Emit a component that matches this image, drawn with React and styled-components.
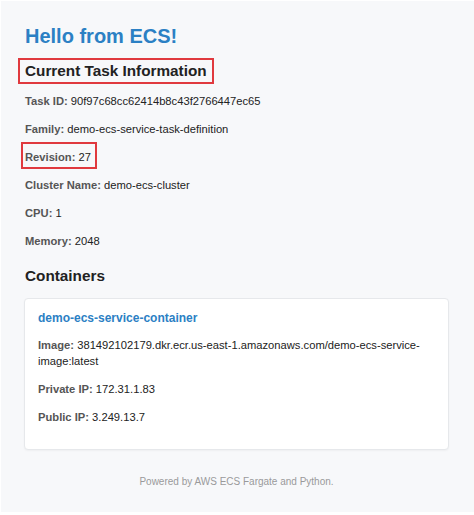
import React from 'react';
import styled, { createGlobalStyle } from 'styled-components';

const GlobalStyle = createGlobalStyle`
    * {
        box-sizing: border-box;
    }
    body {
        margin: 0;
        background: #ffffff;
        font-family: "Liberation Sans", Arial, sans-serif;
    }
`;

const Page = styled.main`
    margin: 1px 0 0 1px;
    min-height: 511px;
    background: #f7f8fa;
    padding: 23px 25px 22px 23px;
`;

const Title = styled.h1`
    margin: 0 0 14px 1px;
    font-size: 20px;
    line-height: 24px;
    font-weight: 700;
    color: #2b80c4;
`;

const SectionTitle = styled.h2`
    position: relative;
    display: inline-block;
    margin: ${(p) => p.$top || 0}px 0 13px 1px;
    font-size: 15.3px;
    line-height: 18px;
    font-weight: 700;
    color: #222222;

    ${(p) => p.$marked && `
        &::after {
            content: "";
            position: absolute;
            top: -4px;
            bottom: -4px;
            left: -7px;
            right: -7px;
            border: 2px solid #e0393e;
        }
    `}
`;

const Block = styled.div`
    display: flex;
    flex-direction: column;
    align-items: flex-start;
    gap: 12px;
    padding-left: ${(p) => p.$indent || 0}px;
`;

const Row = styled.p`
    position: relative;
    display: inline-block;
    margin: 0;
    font-size: 11.2px;
    line-height: 16px;
    color: #222222;

    strong {
        color: #555555;
        font-weight: 700;
    }

    ${(p) => p.$marked && `
        &::after {
            content: "";
            position: absolute;
            top: -7px;
            bottom: -4px;
            left: -4px;
            right: -6px;
            border: 2px solid #e0393e;
        }
    `}
`;

const Card = styled.section`
    background: #ffffff;
    border: 1px solid #e6e8eb;
    border-radius: 4px;
    box-shadow: 0 1px 2px rgba(0, 0, 0, 0.04);
    padding: 11px 13px 24px;
`;

const CardTitle = styled.h3`
    margin: 0 0 11px;
    font-size: 12px;
    line-height: 16px;
    font-weight: 700;
    color: #2b80c4;
`;

const Footer = styled.footer`
    margin-top: 25px;
    text-align: center;
    font-size: 10px;
    line-height: 14px;
    color: #9a9a9a;
`;

const task = [
    ['Task ID', '90f97c68cc62414b8c43f2766447ec65'],
    ['Family', 'demo-ecs-service-task-definition'],
    ['Revision', '27', true],
    ['Cluster Name', 'demo-ecs-cluster'],
    ['CPU', '1'],
    ['Memory', '2048'],
];

const container = [
    ['Image', '381492102179.dkr.ecr.us-east-1.amazonaws.com/demo-ecs-service-image:latest'],
    ['Private IP', '172.31.1.83'],
    ['Public IP', '3.249.13.7'],
];

export default function App() {
    return (
        <>
            <GlobalStyle />
            <Page>
                <Title>Hello from ECS!</Title>
                <SectionTitle $marked>Current Task Information</SectionTitle>
                <Block $indent={1}>
                    {task.map(([label, value, marked]) => (
                        <Row key={label} $marked={marked}>
                            <strong>{label}:</strong> {value}
                        </Row>
                    ))}
                </Block>
                <SectionTitle $top={18}>Containers</SectionTitle>
                <Card>
                    <CardTitle>demo-ecs-service-container</CardTitle>
                    <Block>
                        {container.map(([label, value]) => (
                            <Row key={label}>
                                <strong>{label}:</strong> {value}
                            </Row>
                        ))}
                    </Block>
                </Card>
                <Footer>Powered by AWS ECS Fargate and Python.</Footer>
            </Page>
        </>
    );
}
